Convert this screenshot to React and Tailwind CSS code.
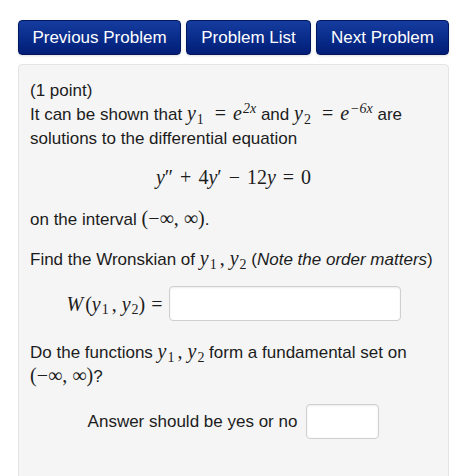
import React from "react";

const serif = "font-['Liberation_Serif','Times_New_Roman',serif]";

const Y = ({ n }) => (
  <span className="whitespace-nowrap">
    <span className="italic">y</span>
    <sub className="text-[14px] ml-[1px]">{n}</sub>
  </span>
);

const Op = ({ children, gap = "mx-[5px]" }) => (
  <span className={gap}>{children}</span>
);

const Math = ({ children, className = "" }) => (
  <span className={`${serif} text-[20px] leading-none whitespace-nowrap ${className}`}>{children}</span>
);

const Pair = () => (
  <>
    <Y n="1" />
    <span className="ml-[3px] mr-[5px]">,</span>
    <Y n="2" />
  </>
);

const NavButton = ({ children, width }) => (
  <button
    className={`${width} h-[35px] rounded-[4px] border border-[#02175e] bg-linear-to-b from-[#153c9f] to-[#021d78] text-white text-[17px] shadow-sm`}
  >
    {children}
  </button>
);

const Field = ({ width }) => (
  <div
    className={`${width} h-[35px] rounded-[4px] border border-[#cfcfcf] bg-white shadow-[inset_0_1px_2px_rgba(0,0,0,0.08)]`}
  />
);

export default function App() {
  return (
    <div className="w-[474px] h-[476px] overflow-hidden bg-white pt-[20px] pl-[18px] font-['Liberation_Sans',Arial,sans-serif] text-[#1c1c1c]">
      <div className="flex gap-[5px]">
        <NavButton width="w-[163px]">Previous Problem</NavButton>
        <NavButton width="w-[125px]">Problem List</NavButton>
        <NavButton width="w-[133px]">Next Problem</NavButton>
      </div>

      <div className="mt-[9px] w-[431px] h-[440px] rounded-[4px] border border-[#e4e4e4] bg-[#f5f5f5] px-[11px] pt-[14px] text-[17px] leading-[24px]">
        <p>
          (1 point)
          <br />
          It can be shown that{" "}
          <Math>
            <Y n="1" />
            <Op gap="ml-[11px] mr-[7px]">=</Op>
            <span className="italic">e</span>
            <sup className="text-[14px] italic ml-[1px]">2x</sup>
          </Math>{" "}
          and{" "}
          <Math>
            <Y n="2" />
            <Op gap="ml-[11px] mr-[7px]">=</Op>
            <span className="italic">e</span>
            <sup className="text-[14px] italic ml-[1px]">−6x</sup>
          </Math>{" "}
          are
          <br />
          solutions to the differential equation
        </p>

        <p className={`mt-[14px] text-center ${serif} text-[20px]`}>
          <span className="italic">y</span>″<Op gap="mx-[7px]">+</Op>4<span className="italic">y</span>′
          <Op gap="mx-[7px]">−</Op>12
          <span className="italic">y</span>
          <Op gap="mx-[7px]">=</Op>0
        </p>

        <p className="mt-[19px]">
          on the interval <Math>(−∞, ∞)</Math>.
        </p>

        <p className="mt-[16px]">
          Find the Wronskian of{" "}
          <Math>
            <Pair />
          </Math>{" "}
          (<span className="italic">Note the order matters</span>)
        </p>

        <div className="mt-[14px] flex items-center justify-center gap-[6px]">
          <Math>
            <span className="italic">W</span>
            <span className="ml-[2px]">(</span>
            <Pair />)<Op gap="ml-[6px]">=</Op>
          </Math>
          <Field width="w-[232px]" />
        </div>

        <p className="mt-[20px]">
          Do the functions{" "}
          <Math>
            <Pair />
          </Math>{" "}
          form a fundamental set on
          <br />
          <Math>(−∞, ∞)</Math>?
        </p>

        <div className="mt-[15px] flex items-center justify-center gap-[9px]">
          <span>Answer should be yes or no</span>
          <Field width="w-[73px]" />
        </div>
      </div>
    </div>
  );
}
